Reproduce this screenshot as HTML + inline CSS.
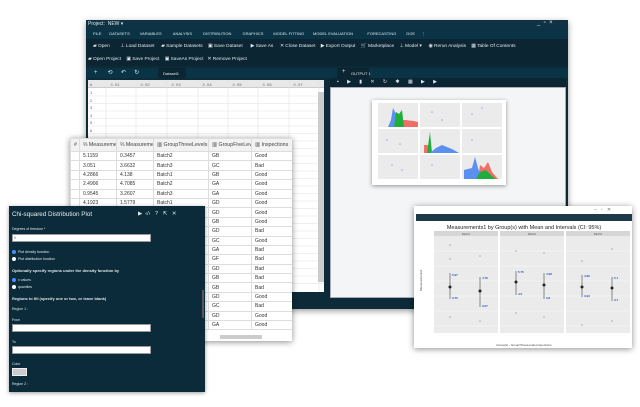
<!DOCTYPE html>
<html><head><meta charset="utf-8"><style>
*{margin:0;padding:0;box-sizing:border-box}
body{width:640px;height:407px;background:#fff;position:relative;overflow:hidden;font-family:"Liberation Sans",sans-serif}
.a{position:absolute}
.t{position:absolute;color:#dfe7ec;font-size:4.5px;white-space:nowrap}
.grid{position:absolute;left:88px;top:80px;width:236px;height:212px;background:#fff;overflow:hidden}
.gh{position:absolute;left:0;top:0;height:8px;width:100%;background:#e8e8e8;border-bottom:1px solid #ccc}
table.d{border-collapse:collapse;font-size:5px;color:#333;width:100%}
table.d td{border:1px solid #ddd;height:9.4px;padding:0 3px;white-space:nowrap;overflow:hidden}
table.d tr.h td{background:#f2f2f2;color:#444;font-size:5.3px;height:13px}
.inp{position:absolute;background:#fff;border:1px solid #999;height:8px}
.dl{position:absolute;color:#dfe7ec;font-size:3.5px;white-space:nowrap}
.b{font-weight:bold;font-size:4px}
</style></head><body>

<div class="a" style="left:86px;top:20px;width:482px;height:289px;background:#0c2a38;box-shadow:0 2px 6px rgba(0,0,0,.4)"></div>
<div class="a" style="left:86px;top:20px;width:482px;height:9px;background:#0f3344"></div>
<div class="t" style="left:88px;top:21px;font-size:5px">Project: &nbsp;NEW ▾</div>
<div class="t" style="left:537px;top:20px;font-size:6px">_ &nbsp;▫ &nbsp;×</div>
<div class="a" style="left:86px;top:29px;width:482px;height:10px;background:#0a3446"></div>
<div class="t" style="left:93px;top:31px;font-size:4px">FILE &nbsp;&nbsp;&nbsp;&nbsp;&nbsp;&nbsp;DATASETS &nbsp;&nbsp;&nbsp;&nbsp;&nbsp;&nbsp;&nbsp;&nbsp;VARIABLES &nbsp;&nbsp;&nbsp;&nbsp;&nbsp;&nbsp;&nbsp;&nbsp;&nbsp;ANALYSIS &nbsp;&nbsp;&nbsp;&nbsp;&nbsp;&nbsp;&nbsp;&nbsp;&nbsp;DISTRIBUTION &nbsp;&nbsp;&nbsp;&nbsp;&nbsp;&nbsp;&nbsp;&nbsp;&nbsp;GRAPHICS &nbsp;&nbsp;&nbsp;&nbsp;&nbsp;&nbsp;&nbsp;&nbsp;MODEL FITTING &nbsp;&nbsp;&nbsp;&nbsp;&nbsp;&nbsp;&nbsp;MODEL EVALUATION &nbsp;&nbsp;&nbsp;&nbsp;&nbsp;&nbsp;&nbsp;&nbsp;&nbsp;&nbsp;&nbsp;&nbsp;FORECASTING &nbsp;&nbsp;&nbsp;&nbsp;&nbsp;&nbsp;&nbsp;&nbsp;DOE &nbsp;&nbsp;&nbsp;&nbsp;&nbsp;⋮</div>
<div class="a" style="left:86px;top:39px;width:482px;height:27px;background:#0c2533"></div>
<div class="t" style="left:93px;top:44px;font-size:4.8px">▰ Open &nbsp;&nbsp;&nbsp;&nbsp;&nbsp;&nbsp;&nbsp;⊥ Load Dataset &nbsp;&nbsp;&nbsp;&nbsp;▰ Sample Datasets &nbsp;&nbsp;&nbsp;▣ Save Dataset &nbsp;&nbsp;&nbsp;&nbsp;&nbsp;▶ Save As &nbsp;&nbsp;&nbsp;&nbsp;✕ Close Dataset &nbsp;&nbsp;&nbsp;▶ Export Output &nbsp;&nbsp;&nbsp;🛒 Marketplace &nbsp;&nbsp;&nbsp;⊥ Model ▾ &nbsp;&nbsp;&nbsp;&nbsp;◉ Rerun Analysis &nbsp;&nbsp;&nbsp;▦ Table Of Contents</div>
<div class="t" style="left:88px;top:57px;font-size:4.8px">▰ Open Project &nbsp;&nbsp;&nbsp;▣ Save Project &nbsp;&nbsp;&nbsp;▣ SaveAs Project &nbsp;&nbsp;✕ Remove Project</div>
<div class="a" style="left:86px;top:68px;width:482px;height:10px;background:#0a3446"></div>
<div class="a" style="left:158px;top:68px;width:28px;height:10px;background:#0c2533"></div>
<div class="t" style="left:94px;top:69px;font-size:6px">+ &nbsp;&nbsp;&nbsp;&nbsp;&nbsp;⟲ &nbsp;&nbsp;&nbsp;&nbsp;↶ &nbsp;&nbsp;&nbsp;&nbsp;↻</div>
<div class="t" style="left:163px;top:71px;font-size:4px">Dataset1</div>
<div class="a" style="left:337px;top:68px;width:32px;height:10px;background:#0c2533"></div>
<div class="t" style="left:342px;top:69px;font-size:6px">+ </div>
<div class="t" style="left:351px;top:71px;font-size:4px">OUTPUT 1</div>
<div class="a" style="left:330px;top:78px;width:236px;height:9px;background:#0c2533"></div>
<div class="t" style="left:337px;top:79px;font-size:5px">▪ &nbsp;&nbsp;&nbsp;&nbsp;&nbsp;▶ &nbsp;&nbsp;&nbsp;&nbsp;&nbsp;▮ &nbsp;&nbsp;&nbsp;&nbsp;&nbsp;✕ &nbsp;&nbsp;&nbsp;&nbsp;&nbsp;↻ &nbsp;&nbsp;&nbsp;&nbsp;&nbsp;✱ &nbsp;&nbsp;&nbsp;&nbsp;&nbsp;▦ &nbsp;&nbsp;&nbsp;&nbsp;&nbsp;▶ &nbsp;&nbsp;&nbsp;&nbsp;&nbsp;▶</div>

<div class="grid">
 <div class="gh"></div>
 <svg class="a" style="left:0;top:0" width="236" height="212">
  <g stroke="#e2e2e2" stroke-width="0.6">
   <line x1="18" y1="0" x2="18" y2="212"/><line x1="48" y1="0" x2="48" y2="212"/><line x1="79" y1="0" x2="79" y2="212"/><line x1="110" y1="0" x2="110" y2="212"/><line x1="140" y1="0" x2="140" y2="212"/><line x1="170" y1="0" x2="170" y2="212"/><line x1="201" y1="0" x2="201" y2="212"/><line x1="231" y1="0" x2="231" y2="212"/>
  </g>
  <g stroke="#e2e2e2" stroke-width="0.6">
   <line x1="0" y1="16" x2="236" y2="16"/><line x1="0" y1="23.5" x2="236" y2="23.5"/><line x1="0" y1="31" x2="236" y2="31"/><line x1="0" y1="38.5" x2="236" y2="38.5"/><line x1="0" y1="46" x2="236" y2="46"/><line x1="0" y1="53.5" x2="236" y2="53.5"/><line x1="0" y1="61" x2="236" y2="61"/><line x1="0" y1="68.5" x2="236" y2="68.5"/><line x1="0" y1="76" x2="236" y2="76"/><line x1="0" y1="83.5" x2="236" y2="83.5"/><line x1="0" y1="91" x2="236" y2="91"/><line x1="0" y1="98.5" x2="236" y2="98.5"/><line x1="0" y1="106" x2="236" y2="106"/><line x1="0" y1="113.5" x2="236" y2="113.5"/><line x1="0" y1="121" x2="236" y2="121"/><line x1="0" y1="128.5" x2="236" y2="128.5"/><line x1="0" y1="136" x2="236" y2="136"/><line x1="0" y1="143.5" x2="236" y2="143.5"/><line x1="0" y1="151" x2="236" y2="151"/><line x1="0" y1="158.5" x2="236" y2="158.5"/><line x1="0" y1="166" x2="236" y2="166"/><line x1="0" y1="173.5" x2="236" y2="173.5"/><line x1="0" y1="181" x2="236" y2="181"/><line x1="0" y1="188.5" x2="236" y2="188.5"/><line x1="0" y1="196" x2="236" y2="196"/><line x1="0" y1="203.5" x2="236" y2="203.5"/>
  </g>
  <rect x="230" y="12" width="6" height="190" fill="#ccc"/>
  <g font-size="4" fill="#666" font-family="Liberation Sans"><text x="2" y="6">#</text><text x="22" y="6">⚠ X1</text><text x="52" y="6">⚠ X2</text><text x="83" y="6">⚠ X3</text><text x="114" y="6">⚠ X4</text><text x="144" y="6">⚠ X5</text><text x="174" y="6">⚠ X6</text><text x="205" y="6">⚠ X7</text>
  <text x="2" y="14">1</text><text x="2" y="22">2</text><text x="2" y="29">3</text><text x="2" y="37">4</text><text x="2" y="44">5</text><text x="2" y="52">6</text></g>
 </svg>
</div>
<div class="a" style="left:330px;top:87px;width:236px;height:211px;background:#f4f5f6;border:1px solid #aab"></div>
<svg class="a" style="left:372px;top:100px;box-shadow:0 1px 4px rgba(0,0,0,.4)" width="134" height="85" viewBox="0 0 134 85">
 <rect width="134" height="85" fill="#fff"/>
 <rect x="6" y="3" width="40" height="24" fill="#ebebeb"/><rect x="48" y="3" width="40" height="24" fill="#ebebeb"/><rect x="90" y="3" width="40" height="24" fill="#ebebeb"/>
 <rect x="6" y="29" width="40" height="24" fill="#ebebeb"/><rect x="48" y="29" width="40" height="24" fill="#ebebeb"/><rect x="90" y="29" width="40" height="24" fill="#ebebeb"/>
 <rect x="6" y="55" width="40" height="24" fill="#ebebeb"/><rect x="48" y="55" width="40" height="24" fill="#ebebeb"/><rect x="90" y="55" width="40" height="24" fill="#ebebeb"/>
 <path d="M20 27 L24 12 L28 20 L33 20 L42 21 L46 22 L46 27Z" fill="#f07067"/>
 <path d="M16 27 L19 20 L21 8 L24 14 L26 27Z" fill="#5b8ff0"/>
 <path d="M22 27 L24 12 L27 14 L30 10 L32 27Z" fill="#1fae3c"/>
 <path d="M52 53 L52 45 L56 45 L57 53Z" fill="#f07067"/>
 <path d="M55 53 L58 32 L60 53Z" fill="#1fae3c"/>
 <path d="M58 53 L64 48 L70 45 L80 49 L87 53Z" fill="#5b8ff0"/>
 <path d="M108 65 L112 68 L116 62 L120 72 L126 79 L106 79Z" fill="#f07067"/>
 <path d="M92 79 L92 70 L100 68 L103 57 L106 68 L110 79Z" fill="#5b8ff0"/>
 <path d="M104 79 L108 72 L114 70 L120 76 L124 79Z" fill="#1fae3c"/>
 <g fill="#6a8ee8" opacity=".7"><circle cx="60" cy="12" r=".8"/><circle cx="70" cy="20" r=".8"/><circle cx="100" cy="14" r=".8"/><circle cx="110" cy="8" r=".8"/><circle cx="15" cy="40" r=".8"/><circle cx="28" cy="44" r=".8"/><circle cx="100" cy="40" r=".8"/><circle cx="20" cy="65" r=".8"/><circle cx="30" cy="70" r=".8"/><circle cx="60" cy="65" r=".8"/></g>
</svg>

<div class="a" style="left:70px;top:138px;width:222px;height:203px;background:#fff;box-shadow:0 1px 6px rgba(0,0,0,.45);overflow:hidden">
<table class="d" style="table-layout:fixed">
<colgroup><col style="width:9px"><col style="width:37px"><col style="width:37px"><col style="width:55px"><col style="width:43px"><col style="width:41px"></colgroup>
<tr class="h"><td>#</td><td>⅔ Measureme</td><td>⅔ Measureme</td><td>▥ GroupThreeLevels</td><td>▥ GroupFiveLev</td><td>▥ Inspections</td></tr>
<tr><td></td><td>5.1159</td><td>0.3457</td><td>Batch2</td><td>GB</td><td>Good</td></tr>
<tr><td></td><td>3.051</td><td>3.6632</td><td>Batch3</td><td>GC</td><td>Bad</td></tr>
<tr><td></td><td>4.2866</td><td>4.138</td><td>Batch1</td><td>GB</td><td>Good</td></tr>
<tr><td></td><td>2.4906</td><td>4.7085</td><td>Batch2</td><td>GA</td><td>Good</td></tr>
<tr><td></td><td>0.9545</td><td>3.2607</td><td>Batch3</td><td>GA</td><td>Good</td></tr>
<tr><td></td><td>4.1923</td><td>1.5779</td><td>Batch1</td><td>GD</td><td>Good</td></tr>
<tr><td></td><td></td><td></td><td></td><td>GD</td><td>Good</td></tr>
<tr><td></td><td></td><td></td><td></td><td>GB</td><td>Good</td></tr>
<tr><td></td><td></td><td></td><td></td><td>GD</td><td>Bad</td></tr>
<tr><td></td><td></td><td></td><td></td><td>GC</td><td>Good</td></tr>
<tr><td></td><td></td><td></td><td></td><td>GA</td><td>Bad</td></tr>
<tr><td></td><td></td><td></td><td></td><td>GF</td><td>Bad</td></tr>
<tr><td></td><td></td><td></td><td></td><td>GD</td><td>Bad</td></tr>
<tr><td></td><td></td><td></td><td></td><td>GB</td><td>Bad</td></tr>
<tr><td></td><td></td><td></td><td></td><td>GB</td><td>Bad</td></tr>
<tr><td></td><td></td><td></td><td></td><td>GD</td><td>Good</td></tr>
<tr><td></td><td></td><td></td><td></td><td>GC</td><td>Bad</td></tr>
<tr><td></td><td></td><td></td><td></td><td>GD</td><td>Good</td></tr>
<tr><td></td><td></td><td></td><td></td><td>GA</td><td>Good</td></tr>
</table>
<div class="a" style="left:150px;top:197px;width:42px;height:4px;background:#ccc"></div>
</div>

<div class="a" style="left:9px;top:206px;width:196px;height:186px;background:#0b2b3a;box-shadow:0 1px 4px rgba(0,0,0,.4)"></div>
<div class="t" style="left:12px;top:211px;font-size:6.3px;color:#e6eef2">Chi-squared Distribution Plot</div>
<div class="t" style="left:138px;top:211px;font-size:5.5px">▶ &nbsp;‹/› &nbsp;&nbsp;? &nbsp;&nbsp;⇱ &nbsp;&nbsp;✕</div>
<div class="dl" style="left:12px;top:227px">Degrees of freedom *</div>
<div class="inp" style="left:12px;top:234px;width:139px"></div>
<div class="a" style="left:14px;top:236px;font-size:3.5px;color:#666">0</div>
<div class="a" style="left:12px;top:250px;width:4px;height:4px;border-radius:50%;background:#4a90ff"></div>
<div class="dl" style="left:18px;top:250px">Plot density function</div>
<div class="a" style="left:12px;top:257px;width:4px;height:4px;border-radius:50%;background:#fff"></div>
<div class="dl" style="left:18px;top:257px">Plot distribution function</div>
<div class="dl b" style="left:12px;top:268px">Optionally specify regions under the density function by</div>
<div class="a" style="left:12px;top:278px;width:4px;height:4px;border-radius:50%;background:#4a90ff"></div>
<div class="dl" style="left:18px;top:278px">x values</div>
<div class="a" style="left:12px;top:285px;width:4px;height:4px;border-radius:50%;background:#fff"></div>
<div class="dl" style="left:18px;top:285px">quantiles</div>
<div class="dl b" style="left:12px;top:296px">Regions to fill (specify one or two, or leave blank)</div>
<div class="dl" style="left:12px;top:307px">Region 1 :</div>
<div class="dl" style="left:12px;top:318px">From</div>
<div class="inp" style="left:12px;top:324px;width:139px"></div>
<div class="dl" style="left:12px;top:340px">To</div>
<div class="inp" style="left:12px;top:346px;width:139px"></div>
<div class="dl" style="left:12px;top:362px">Color</div>
<div class="a" style="left:12px;top:368px;width:15px;height:8px;background:#ccc;border:1px solid #eee"></div>
<div class="dl" style="left:12px;top:382px">Region 2 :</div>
<div class="a" style="left:202px;top:290px;width:2px;height:28px;background:#556"></div>

<div class="a" style="left:414px;top:206px;width:218px;height:142px;background:#fff;box-shadow:0 1px 6px rgba(0,0,0,.45)"></div>
<div class="t" style="left:594px;top:207px;font-size:5px;color:#777">– &nbsp;&nbsp;▫ &nbsp;&nbsp;✕</div>
<div class="a" style="left:416px;top:214px;width:216px;height:7px;background:#1e3a4a"></div>
<svg class="a" style="left:416px;top:221px" width="216" height="126" viewBox="0 0 216 126">
 <text x="108" y="8" font-size="5.5" text-anchor="middle" font-family="Liberation Sans" fill="#222">Measurements1 by Group(s)  with Mean and Intervals (CI: 95%)</text>
 <rect x="18" y="10" width="64" height="117" fill="#ebebeb"/><rect x="84" y="10" width="64" height="117" fill="#ebebeb"/><rect x="150" y="10" width="64" height="117" fill="#ebebeb"/>
 <rect x="18" y="10" width="64" height="5" fill="#d6d6d6"/><rect x="84" y="10" width="64" height="5" fill="#d6d6d6"/><rect x="150" y="10" width="64" height="5" fill="#d6d6d6"/>
 <g font-size="2.5" fill="#555" text-anchor="middle"><text x="50" y="14">Batch1</text><text x="116" y="14">Batch2</text><text x="182" y="14">Batch3</text></g>
 <rect x="0" y="112" width="216" height="14" fill="#fff"/>
 <g stroke="#fff" stroke-width=".4"><line x1="18" y1="30" x2="214" y2="30"/><line x1="18" y1="45" x2="214" y2="45"/><line x1="18" y1="60" x2="214" y2="60"/><line x1="18" y1="75" x2="214" y2="75"/><line x1="18" y1="90" x2="214" y2="90"/><line x1="18" y1="105" x2="214" y2="105"/></g>
 <g fill="#222"><circle cx="34" cy="66" r="1.5"/><circle cx="64" cy="70" r="1.5"/><circle cx="100" cy="61" r="1.5"/><circle cx="128" cy="64" r="1.5"/><circle cx="166" cy="66" r="1.5"/><circle cx="196" cy="67" r="1.5"/></g>
 <g stroke="#222" stroke-width=".5"><line x1="34" y1="52" x2="34" y2="78"/><line x1="64" y1="56" x2="64" y2="86"/><line x1="100" y1="50" x2="100" y2="74"/><line x1="128" y1="52" x2="128" y2="78"/><line x1="166" y1="54" x2="166" y2="76"/><line x1="196" y1="56" x2="196" y2="80"/></g>
 <g fill="#888"><circle cx="34" cy="24" r=".6"/><circle cx="34" cy="38" r=".6"/><circle cx="34" cy="96" r=".6"/><circle cx="64" cy="35" r=".6"/><circle cx="64" cy="100" r=".6"/><circle cx="100" cy="30" r=".6"/><circle cx="100" cy="92" r=".6"/><circle cx="128" cy="32" r=".6"/><circle cx="128" cy="96" r=".6"/><circle cx="166" cy="40" r=".6"/><circle cx="166" cy="104" r=".6"/><circle cx="196" cy="28" r=".6"/><circle cx="196" cy="100" r=".6"/></g>
 <g fill="#2a4fd6" font-size="3" font-weight="bold"><text x="36" y="55">5.97</text><text x="36" y="78">3.75</text><text x="66" y="58">4.76</text><text x="66" y="86">3.07</text><text x="102" y="52">5.75</text><text x="102" y="74">4.5</text><text x="130" y="54">4.98</text><text x="130" y="78">3.8</text><text x="168" y="56">4.96</text><text x="168" y="76">3.93</text><text x="198" y="58">5.1</text><text x="198" y="80">3.7</text></g>
 <text x="108" y="125" font-size="3" text-anchor="middle" fill="#444">Group(s) - GroupThreeLevels,Inspections</text>
 <text x="6" y="70" font-size="3" fill="#444" transform="rotate(-90 6 70)">Measurements1</text>
</svg>
</body></html>
